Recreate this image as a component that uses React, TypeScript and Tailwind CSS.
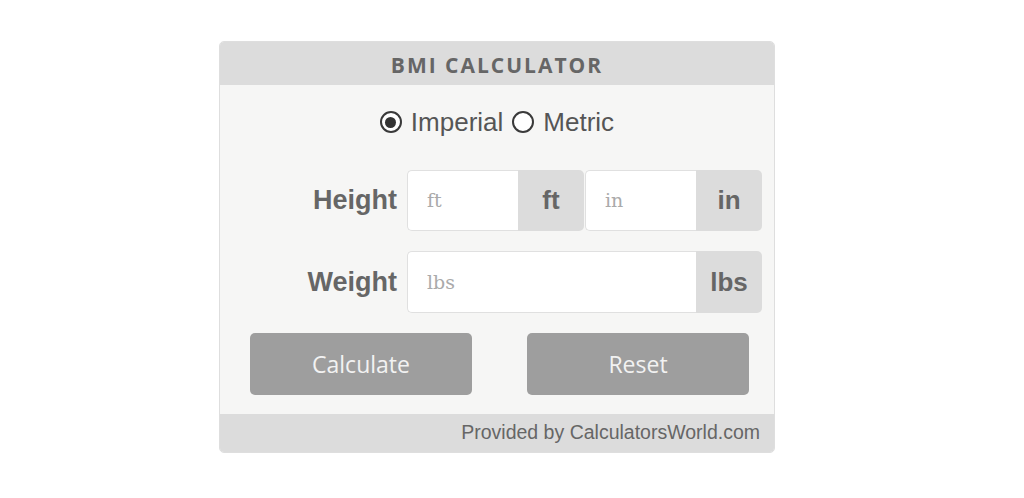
import { useState } from "react";

function Radio({ checked, label, onClick }: { checked: boolean; label: string; onClick: () => void }) {
  return (
    <button type="button" onClick={onClick} className="flex items-center gap-[9px]">
      <span className="flex h-[22px] w-[22px] items-center justify-center rounded-full border-[2px] border-[#3a3a3a] bg-white">
        {checked && <span className="h-[11px] w-[11px] rounded-full bg-[#333]" />}
      </span>
      <span>{label}</span>
    </button>
  );
}

function InputGroup({ placeholder, unit, width }: { placeholder: string; unit: string; width: string }) {
  return (
    <div className={`flex h-full ${width}`}>
      <input
        placeholder={placeholder}
        className="min-w-0 flex-1 rounded-l-[5px] border border-r-0 border-[#e0e0e0] bg-white pl-[19px] font-['DejaVu_Serif',serif] text-[19px] text-[#555] outline-none placeholder:text-[#aaa]"
      />
      <span className="flex w-[66px] items-center justify-center rounded-r-[5px] bg-[#dcdcdc] text-[26px] font-bold text-[#666]">
        {unit}
      </span>
    </div>
  );
}

export default function App() {
  const [units, setUnits] = useState<"imperial" | "metric">("imperial");

  return (
    <div className="min-h-screen bg-white pt-[41px] font-['Liberation_Sans',Arial,sans-serif]">
      <div className="ml-[219px] w-[556px] overflow-hidden rounded-[5px] border border-[#dedede]">
        <header className="flex h-[43px] items-center justify-center bg-[#dcdcdc] pt-[4px]">
          <h1 className="font-['Open_Sans',sans-serif] text-[21px] font-bold uppercase tracking-[2px] text-[#666]">
            BMI Calculator
          </h1>
        </header>

        <main className="bg-[#f6f6f5] pt-[22px] pb-[19px]">
          <div className="flex h-[30px] items-center justify-center gap-[9px] text-[26px] text-[#555]">
            <Radio checked={units === "imperial"} label="Imperial" onClick={() => setUnits("imperial")} />
            <Radio checked={units === "metric"} label="Metric" onClick={() => setUnits("metric")} />
          </div>

          <div className="mt-[33px] flex h-[61px] items-center">
            <label className="w-[177px] text-right text-[27px] font-bold text-[#666]">Height</label>
            <div className="ml-[10px] flex h-full gap-[1px]">
              <InputGroup placeholder="ft" unit="ft" width="w-[177px]" />
              <InputGroup placeholder="in" unit="in" width="w-[177px]" />
            </div>
          </div>

          <div className="mt-[20px] flex h-[62px] items-center">
            <label className="w-[177px] text-right text-[27px] font-bold text-[#666]">Weight</label>
            <div className="ml-[10px] h-full">
              <InputGroup placeholder="lbs" unit="lbs" width="w-[355px]" />
            </div>
          </div>

          <div className="mt-[20px] flex gap-[55px] pl-[30px] font-['Open_Sans',sans-serif] text-[23px] text-[#f2f2f2]">
            <button className="h-[62px] w-[222px] rounded-[5px] bg-[#9e9e9e]">Calculate</button>
            <button className="h-[62px] w-[222px] rounded-[5px] bg-[#9e9e9e]">Reset</button>
          </div>
        </main>

        <footer className="flex h-[38px] items-center justify-end bg-[#dcdcdc] pr-[14px] text-[19.5px] text-[#666]">
          Provided by CalculatorsWorld.com
        </footer>
      </div>
    </div>
  );
}
